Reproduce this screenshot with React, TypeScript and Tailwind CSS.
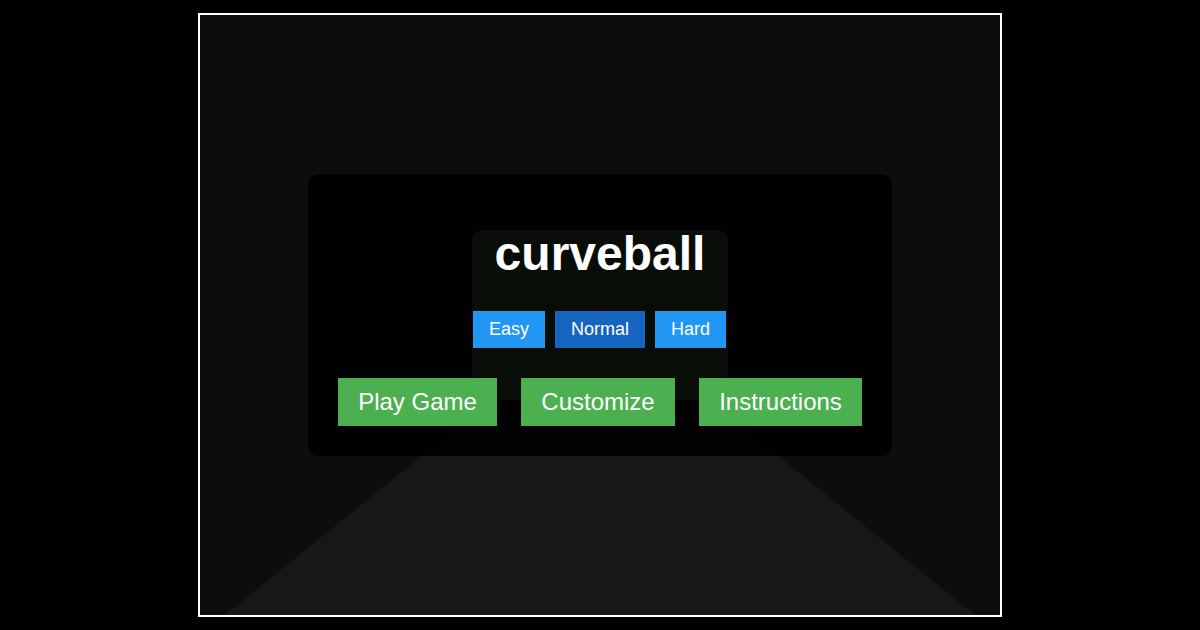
import React from 'react';

const difficulties = [
  { label: 'Easy', width: 'w-[72px]', color: 'bg-[#2196f3]' },
  { label: 'Normal', width: 'w-[90px]', color: 'bg-[#1565c0]' },
  { label: 'Hard', width: 'w-[71px]', color: 'bg-[#2196f3]' },
];

const actions = [
  { label: 'Play Game', width: 'w-[159px]' },
  { label: 'Customize', width: 'w-[154px]' },
  { label: 'Instructions', width: 'w-[163px]' },
];

export default function App() {
  return (
    <div className="w-[1200px] h-[630px] bg-black flex items-center justify-center font-['Liberation_Sans',Arial,sans-serif]">
      <div className="relative w-[804px] h-[604px] border-2 border-white bg-[#0d0d0d] overflow-hidden">
        {/* back wall, floor and ball behind the menu */}
        <div className="absolute left-[272px] top-[215px] w-[256px] h-[170px] rounded-t-[10px] bg-[#508050]" />
        <div className="absolute left-[383px] top-[288px] w-[34px] h-[34px] rounded-full bg-[#b06040]" />
        <svg className="absolute inset-0" width="800" height="600" viewBox="0 0 800 600">
          <polygon points="25,600 272,400 528,400 775,600" fill="#171717" />
        </svg>

        <div className="absolute left-[108px] top-[159px] w-[584px] h-[282px] rounded-[10px] bg-black/90 p-[30px] flex flex-col items-center text-white">
          <h1 className="text-[48px] leading-[55px] font-bold mt-[22px] mb-[30px]">curveball</h1>
          <div className="w-[254px] flex gap-[10px] mb-[30px]">
            {difficulties.map((d) => (
              <button key={d.label} className={`h-[37px] text-[18px] text-center ${d.width} ${d.color}`}>
                {d.label}
              </button>
            ))}
          </div>
          <div className="flex gap-6">
            {actions.map((a) => (
              <button key={a.label} className={`h-12 text-[24px] text-center bg-[#4caf50] ${a.width}`}>
                {a.label}
              </button>
            ))}
          </div>
        </div>
      </div>
    </div>
  );
}
